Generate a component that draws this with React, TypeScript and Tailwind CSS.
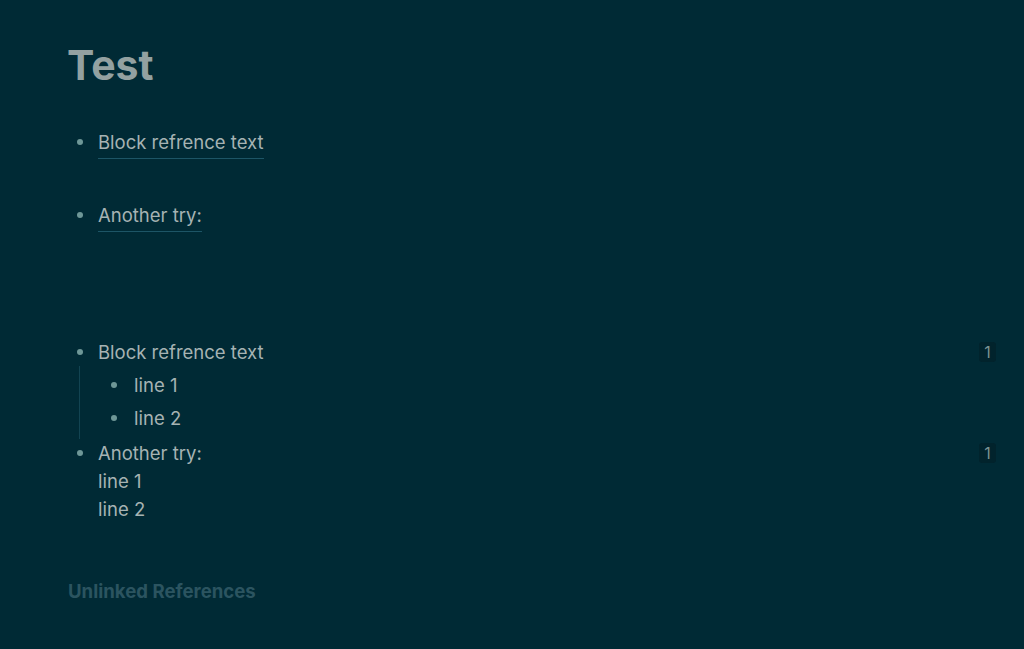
import React from "react";

function Bullet({ className = "" }: { className?: string }) {
  return (
    <span className={"flex h-[20px] w-[20px] shrink-0 items-center justify-center " + className}>
      <span className="h-[6px] w-[6px] rounded-full bg-[#6e9797]" />
    </span>
  );
}

function Badge() {
  return (
    <span className="mt-[4px] h-[20px] w-[17px] rounded-[3px] bg-[#01232c] text-center text-[16px] leading-[20px] text-[#7a9393]">
      1
    </span>
  );
}

export default function App() {
  return (
    <div
      className="min-h-[649px] w-full bg-[#002a35] text-[#a6b3b3]"
      style={{ fontFamily: "Inter, 'Noto Sans', sans-serif" }}
    >
      <div className="pl-[67px] pr-[28px] pt-[39px]">
        <h1 className="text-[41px] font-bold leading-[52px] text-[#93a1a1]">Test</h1>

        <div className="mt-[37px] flex flex-col text-[18.5px] leading-[28px]">
          <div className="flex items-start">
            <Bullet className="ml-[3px] mt-[4px]" />
            <div className="ml-[8px] border-b border-[#1d5566] pb-[2px]">Block refrence text</div>
          </div>
          <div className="mt-[42px] flex items-start">
            <Bullet className="ml-[3px] mt-[4px]" />
            <div className="ml-[8px] border-b border-[#1d5566] pb-[2px]">Another try:</div>
          </div>
        </div>

        <div className="mt-[106px] flex flex-col text-[18.5px] leading-[28px]">
          <div className="flex items-start">
            <Bullet className="ml-[3px] mt-[4px]" />
            <div className="ml-[8px] flex-1">Block refrence text</div>
            <Badge />
          </div>
          <div className="ml-[12px] flex flex-col border-l border-[#124452] pb-[5px] pl-[24px] pt-[2px]">
            <div className="flex items-start pb-[2px] pt-[3px]">
              <Bullet className="mt-[4px]" />
              <div className="ml-[10px]">line 1</div>
            </div>
            <div className="flex items-start pb-[2px] pt-[3px]">
              <Bullet className="mt-[4px]" />
              <div className="ml-[10px]">line 2</div>
            </div>
          </div>
          <div className="flex items-start">
            <Bullet className="ml-[3px] mt-[4px]" />
            <div className="ml-[8px] flex-1">
              <div>Another try:</div>
              <div>line 1</div>
              <div>line 2</div>
            </div>
            <Badge />
          </div>
        </div>

        <div className="ml-[1px] mt-[54px] text-[18.6px] font-bold leading-[28px] text-[#2b5460]">Unlinked References</div>
      </div>
    </div>
  );
}
